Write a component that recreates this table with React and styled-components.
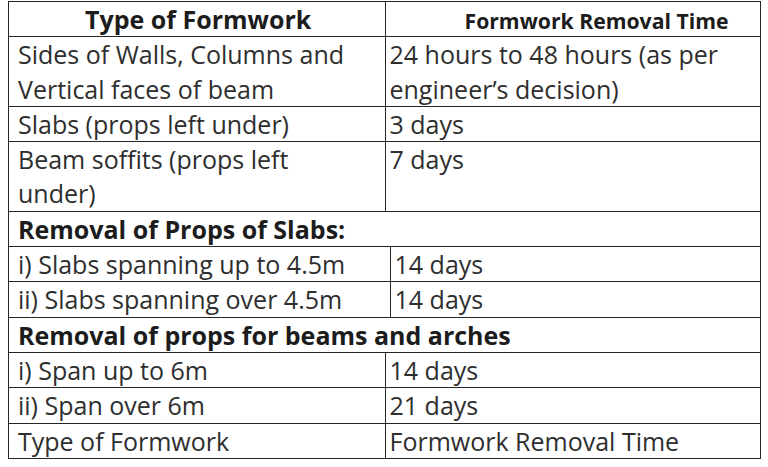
import React from "react";
import styled, { createGlobalStyle } from "styled-components";

const GlobalStyle = createGlobalStyle`
  html, body { margin: 0; padding: 0; background: #ffffff; }
  body { font-family: "Open Sans", "Liberation Sans", sans-serif; }
`;

const LINE = "1.5px solid #262626";

const Page = styled.div`
  padding: 1px 0 0 8px;
`;

const Table = styled.div`
  width: 753px;
  box-sizing: border-box;
  border: ${LINE};
  display: flex;
  flex-direction: column;
  font-family: "Open Sans", "Liberation Sans", sans-serif;
  font-size: 25px;
  line-height: 34.3px;
  color: #2e2e2e;
  & > * + * {
    border-top: ${LINE};
  }
`;

const Row = styled.div`
  display: grid;
  grid-template-columns: ${(p) => p.$split || 375.5}px 1fr;
`;

const FullRow = styled.div`
  padding-left: 9px;
  font-weight: 700;
  color: #1c1c1c;
  white-space: nowrap;
`;

const Cell = styled.div`
  padding-left: 9px;
  white-space: nowrap;
  & + & {
    border-left: ${LINE};
    padding-left: ${(p) => p.$pad ?? 5}px;
  }
`;

const HeadCell = styled.div`
  font-weight: 700;
  color: #1c1c1c;
  white-space: nowrap;
  padding-left: ${(p) => p.$pad}px;
  font-size: ${(p) => p.$size || 25}px;
  padding-top: ${(p) => p.$top || 0}px;
  line-height: ${(p) => 34.3 - (p.$top || 0)}px;
  & + & {
    border-left: ${LINE};
  }
`;

const rows = [
  { type: "row", a: ["Sides of Walls, Columns and", "Vertical faces of beam"], b: ["24 hours to 48 hours (as per", "engineer\u2019s decision)"] },
  { type: "row", a: ["Slabs (props left under)"], b: ["3 days"] },
  { type: "row", a: ["Beam soffits (props left", "under)"], b: ["7 days"] },
  { type: "section", text: "Removal of Props of Slabs:" },
  { type: "row", a: ["i) Slabs spanning up to 4.5m"], b: ["14 days"], split: 380.5, pad: 4 },
  { type: "row", a: ["ii) Slabs spanning over 4.5m"], b: ["14 days"], split: 380.5, pad: 4 },
  { type: "section", text: "Removal of props for beams and arches" },
  { type: "row", a: ["i) Span up to 6m"], b: ["14 days"] },
  { type: "row", a: ["ii) Span over 6m"], b: ["21 days"] },
  { type: "row", a: ["Type of Formwork"], b: ["Formwork Removal Time"] },
];

const Lines = ({ items }) => items.map((t, i) => <div key={i}>{t}</div>);

export default function App() {
  return (
    <>
      <GlobalStyle />
      <Page>
        <Table>
          <Row>
            <HeadCell $pad={76}>Type of Formwork</HeadCell>
            <HeadCell $pad={79} $size={21.2} $top={2.5}>
              Formwork Removal Time
            </HeadCell>
          </Row>
          {rows.map((r, i) =>
            r.type === "section" ? (
              <FullRow key={i}>{r.text}</FullRow>
            ) : (
              <Row key={i} $split={r.split}>
                <Cell>
                  <Lines items={r.a} />
                </Cell>
                <Cell $pad={r.pad}>
                  <Lines items={r.b} />
                </Cell>
              </Row>
            )
          )}
        </Table>
      </Page>
    </>
  );
}
